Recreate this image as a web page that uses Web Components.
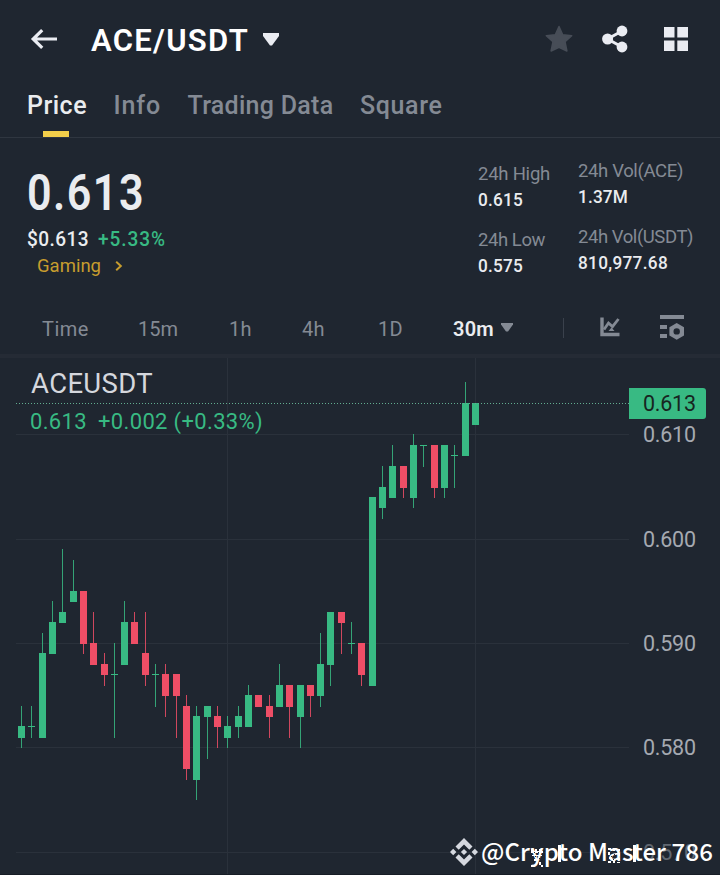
<!DOCTYPE html>
<html lang="en">
<head>
<meta charset="utf-8">
<title>ACE/USDT</title>
<style>
  :root {
    --bg: #1f2630;
    --line: #2f3640;
    --text: #eaecef;
    --muted: #848a94;
    --up: #38ba83;
    --down: #ee4e66;
    --gold: #f3cf4a;
  }
  * { box-sizing: border-box; }
  body {
    margin: 0;
    background: var(--bg);
    color: var(--text);
    font-family: Roboto, "Liberation Sans", sans-serif;
  }
</style>
</head>
<body>
<trade-app></trade-app>

<script>
  const define = (name, cls) => customElements.get(name) || customElements.define(name, cls);

  /**
   * <fit-text width="58"> — one line of text, spaced out (or squeezed) to a
   * known ink width. squeeze=".9" narrows the glyphs before spacing them.
   */
  class FitText extends HTMLElement {
    connectedCallback() {
      const root = this.attachShadow({ mode: 'open' });
      root.innerHTML = `
        <style>
          :host { display:block; flex:none; white-space:nowrap; }
          span { display:block; width:max-content; transform-origin:0 50%; }
        </style>
        <span><slot></slot></span>`;
      const span = root.querySelector('span');
      const target = parseFloat(this.getAttribute('width'));
      const squeeze = parseFloat(this.getAttribute('squeeze') || '1');
      const count = this.textContent.length;
      const natural = span.getBoundingClientRect().width;
      span.style.letterSpacing = ((target / squeeze - natural) / count).toFixed(3) + 'px';
      if (squeeze !== 1) span.style.transform = `scaleX(${squeeze})`;
      this.style.width = target + 'px';
    }
  }

  const ICONS = {
    back: [28, 20, `<path d="M27 10H3M12.2 1.2 3.2 10l9 8.8" fill="none" stroke="#eaecf2" stroke-width="3.2"/>`],
    caret: [16, 13, `<path d="M0 0h16v3L9 12.6H7L0 3z" fill="#eaecf2"/>`],
    star: [28, 28, `<path d="M14 1.500l3.700 8.200 9 1-6.700 6 1.900 9.300L14 22.200 6.100 26l1.900-9.300-6.700-6 9-1z" fill="#474d57" stroke="#474d57" stroke-width="1.500" stroke-linejoin="round"/>`],
    share: [26, 28, `<g fill="#eaecf2"><circle cx="5.600" cy="14" r="5.500"/><circle cx="20" cy="6" r="5.400"/><circle cx="20" cy="22" r="5.400"/></g><path d="M20 6 5.600 14 20 22" fill="none" stroke="#eaecf2" stroke-width="3"/>`],
    grid: [24, 24, `<path d="M0 0h10.500v10.500H0zM13.300 0H24v10.500H13.300zM0 13.500h10.500V24H0zM13.300 13.500H24V24H13.300z" fill="#eaecf2"/>`],
    chevron: [8, 10, `<path d="M1.200 .8 5.800 5l-4.600 4.200" fill="none" stroke="#c79d2e" stroke-width="2"/>`],
    down: [12, 9, `<path d="M0 0h12v1.500L7 8.500H5L0 1.500z" fill="#848a94"/>`],
    chart: [20, 20, `<path d="M2 .5V17.500H19.500" fill="none" stroke="#848a94" stroke-width="3.400"/><path d="M4 12.500 8.500 6l4 3.600L18.500 2" fill="none" stroke="#848a94" stroke-width="2.800"/><path d="M11.500 10.500l3 3.500h-6z" fill="#848a94"/>`],
    settings: [24, 26, `<path d="M0 0h24v4H0zM0 10h7v4H0zM0 19h7v4H0z" fill="#848a94"/><path fill-rule="evenodd" d="M16.700 8l7.300 4.200v8.400l-7.300 4.200-7.300-4.200v-8.400zM16.700 13.200a3.200 3.200 0 1 0 0 6.400 3.200 3.200 0 0 0 0-6.400z" fill="#848a94"/>`],
    // diamond logo: two chevrons, a centre and two side diamonds
    logo: [28, 28, `<g fill="#d5d8df"><path d="M14 0l8.500 8.500-3.200 3.200L14 6.400l-5.300 5.300-3.200-3.200zM14 28l8.500-8.500-3.200-3.200L14 21.600l-5.300-5.300-3.200 3.200z"/><path d="M14 10.900l3.100 3.100-3.100 3.100-3.100-3.100zM3.200 10.800 6.400 14l-3.200 3.200L0 14zM24.800 10.800 28 14l-3.200 3.200-3.200-3.200z"/></g>`]
  };

  class UiIcon extends HTMLElement {
    connectedCallback() {
      const [w, h, body] = ICONS[this.getAttribute('name')];
      this.attachShadow({ mode: 'open' }).innerHTML = `
        <style>:host { display:block; flex:none; line-height:0; } svg { display:block; }</style>
        <svg width="${w}" height="${h}" viewBox="0 0 ${w} ${h}" aria-hidden="true">${body}</svg>`;
    }
  }

  class PairHeader extends HTMLElement {
    connectedCallback() {
      this.attachShadow({ mode: 'open' }).innerHTML = `
        <style>
          :host { display:flex; align-items:center; height:80px; padding:0 32px 0 30px; box-sizing:border-box; }
          .title { margin-left:33px; padding-top:2px; font-size:31px; font-weight:600; line-height:40px; color:#fff; }
          .caret { margin-left:14px; padding-bottom:2px; }
          .tools { display:flex; align-items:center; margin-left:auto; padding-bottom:3px; }
          .share { margin-left:29px; }
          .grid { margin-left:36px; }
          .back { padding-bottom:3px; }
        </style>
        <ui-icon class="back" name="back"></ui-icon>
        <fit-text class="title" width="158">ACE/USDT</fit-text>
        <ui-icon class="caret" name="caret"></ui-icon>
        <div class="tools">
          <ui-icon name="star"></ui-icon>
          <ui-icon class="share" name="share"></ui-icon>
          <ui-icon class="grid" name="grid"></ui-icon>
        </div>`;
    }
  }

  class PageTabs extends HTMLElement {
    connectedCallback() {
      this.attachShadow({ mode: 'open' }).innerHTML = `
        <style>
          :host { display:flex; gap:26.5px; height:58px; padding:8px 27px 0; border-bottom:1px solid var(--line);
                  box-sizing:border-box; font-size:25px; font-weight:500; line-height:36px; color:var(--muted); }
          .tab { display:flex; flex-direction:column; align-items:center; }
          .on { color:var(--text); }
          .on::after { content:""; width:26px; height:6px; margin:7px 2px 0 0; background:var(--gold); }
        </style>
        <div class="tab on"><fit-text width="60">Price</fit-text></div>
        <div class="tab"><fit-text width="47.5">Info</fit-text></div>
        <div class="tab"><fit-text width="146">Trading Data</fit-text></div>
        <div class="tab"><fit-text width="82.500">Square</fit-text></div>`;
    }
  }

  class StatItem extends HTMLElement {
    connectedCallback() {
      this.attachShadow({ mode: 'open' }).innerHTML = `
        <style>
          :host { display:flex; flex-direction:column; gap:2px; height:66px; box-sizing:border-box;
                  font-size:18.5px; line-height:24px; }
          .label { color:var(--muted); }
          .value { color:var(--text); font-weight:500; }
        </style>
        <div class="label"><slot name="label"></slot></div>
        <div class="value"><slot></slot></div>`;
    }
  }

  class PriceSummary extends HTMLElement {
    connectedCallback() {
      this.attachShadow({ mode: 'open' }).innerHTML = `
        <style>
          :host { display:flex; height:164px; padding-left:27px; box-sizing:border-box; }
          .left { width:451px; padding-top:25px; }
          .price { font-size:49.5px; font-weight:600; line-height:60px; }
          .row { display:flex; align-items:center; gap:9px; margin-top:3px; font-size:20.5px; font-weight:500; line-height:26px; }
          .up { color:var(--up); }
          .tag { display:flex; align-items:center; gap:14px; padding-left:10px; font-size:18.5px; line-height:28px; color:#c79d2e; }
          .col { padding-top:24px; width:100px; }
          .col.two { padding-top:21px; }
        </style>
        <div class="left">
          <fit-text class="price" width="118" squeeze=".87">0.613</fit-text>
          <div class="row">
            <fit-text width="62" squeeze=".93">$0.613</fit-text>
            <fit-text class="up" width="68" squeeze=".93">+5.33%</fit-text>
          </div>
          <div class="tag"><fit-text width="64">Gaming</fit-text><ui-icon name="chevron"></ui-icon></div>
        </div>
        <div class="col">
          <stat-item><fit-text slot="label" width="72">24h High</fit-text><fit-text width="45" squeeze=".93">0.615</fit-text></stat-item>
          <stat-item><fit-text slot="label" width="67">24h Low</fit-text><fit-text width="45" squeeze=".93">0.575</fit-text></stat-item>
        </div>
        <div class="col two">
          <stat-item><fit-text slot="label" width="105">24h Vol(ACE)</fit-text><fit-text width="50" squeeze=".93">1.37M</fit-text></stat-item>
          <stat-item><fit-text slot="label" width="115">24h Vol(USDT)</fit-text><fit-text width="90" squeeze=".93">810,977.68</fit-text></stat-item>
        </div>`;
    }
  }

  class IntervalBar extends HTMLElement {
    connectedCallback() {
      this.attachShadow({ mode: 'open' }).innerHTML = `
        <style>
          :host { display:flex; align-items:center; height:56px; padding:0 36px 0 42px; box-sizing:border-box;
                  border-bottom:4px solid #252b35; font-size:20px; line-height:26px; color:var(--muted); }
          fit-text { padding-top:2px; }
          .on { color:var(--text); font-weight:600; }
          .rule { width:1px; height:20px; background:#3a414c; }
        </style>
        <fit-text width="47">Time</fit-text>
        <fit-text width="40" style="margin-left:49px">15m</fit-text>
        <fit-text width="23" style="margin-left:51px">1h</fit-text>
        <fit-text width="23" style="margin-left:50px">4h</fit-text>
        <fit-text width="25" style="margin-left:53px">1D</fit-text>
        <fit-text class="on" width="41" style="margin-left:50px">30m</fit-text>
        <ui-icon name="down" style="margin-left:7px; padding-bottom:2px"></ui-icon>
        <span class="rule" style="margin-left:50px"></span>
        <ui-icon name="chart" style="margin-left:36px; padding-bottom:2px"></ui-icon>
        <ui-icon name="settings" style="margin-left:auto"></ui-icon>`;
    }
  }

  // [open, close, high, low] in thousandths of a USDT
  const CANDLES = [
    [581, 582, 584, 580], [582, 582, 584, 581], [581, 589, 591, 581], [589, 592, 594, 589],
    [592, 593, 599, 592], [594, 595, 598, 594], [595, 590, 595, 589], [590, 588, 593, 588],
    [588, 587, 589, 586], [587, 587, 590, 581], [588, 592, 594, 588], [592, 590, 593, 590],
    [589, 587, 593, 586], [587, 587, 588, 584], [587, 585, 588, 583], [587, 585, 587, 581],
    [584, 578, 585, 577], [577, 583, 584, 575], [583, 584, 584, 579], [583, 582, 584, 580],
    [581, 582, 583, 580], [582, 583, 584, 581], [582, 585, 586, 582], [585, 584, 585, 584],
    [584, 583, 585, 581], [584, 586, 588, 584], [586, 584, 586, 581], [583, 586, 586, 580],
    [586, 585, 586, 583], [585, 588, 591, 584], [588, 593, 593, 586], [593, 592, 593, 589],
    [590, 590, 592, 589], [590, 587, 590, 586], [586, 604, 604, 586], [603, 605, 607, 602],
    [604, 607, 609, 604], [607, 605, 607, 604], [604, 609, 610, 603], [609, 609, 609, 607],
    [609, 605, 609, 604], [605, 609, 609, 604], [608, 608, 609, 605], [608, 613, 615, 608],
    [611, 613, 613, 611]
  ];

  class CandleChart extends HTMLElement {
    connectedCallback() {
      const top = 358;
      const y = p => Math.floor(434.9 + (610 - p) * 10.43) - top;
      const candles = CANDLES.map(([o, c, h, l], i) => {
        const x = Math.floor(21.5 + i * 10.315);
        const body = o === c ? 1 : y(Math.min(o, c)) - y(Math.max(o, c)) + 1;
        return `<g fill="var(${c < o ? '--down' : '--up'})">
          <rect x="${x}" y="${y(h)}" width="1" height="${y(l) - y(h) + 1}" opacity=".85"/>
          <rect x="${x - 3}" y="${y(Math.max(o, c))}" width="7" height="${body}"/></g>`;
      }).join('');
      const levels = [610, 600, 590, 580, 570];
      const grid = levels.map(p => `<rect x="16" y="${y(p)}" width="613" height="1"/>`).join('');
      const labels = levels.map(p =>
        `<text x="643" y="${y(p) + 8}" textLength="53"${p === 570 ? ' opacity=".5"' : ''}>0.${p}</text>`).join('');

      this.attachShadow({ mode: 'open' }).innerHTML = `
        <style>
          :host { display:block; position:relative; height:517px; overflow:hidden; }
          svg { display:block; }
          text { font-size:21.500px; fill:#a5a9b1; }
          .legend { position:absolute; left:31px; top:9px; }
          .name { font-size:27.500px; line-height:34px; color:#d5d7dd; }
          .change { display:flex; gap:11px; margin-top:6px; margin-left:-1px; font-size:22px; line-height:30px; color:var(--up); }
        </style>
        <svg width="720" height="517" viewBox="0 0 720 517" shape-rendering="crispEdges">
          <g fill="#2a313b"><rect x="227" width="1" height="517"/><rect x="475" width="1" height="517"/>${grid}</g>
          ${candles}
          <path d="M16 45.500H629" stroke="#62ad90" stroke-width="1" stroke-dasharray="1 2"/>
          ${labels}
          <path d="M629 30h74a3 3 0 0 1 3 3v25a3 3 0 0 1-3 3h-74z" fill="var(--up)" shape-rendering="auto"/>
          <text x="643" y="53" textLength="53" style="fill:#17251f">0.613</text>
          <rect y="516" width="720" height="1" fill="#171d26"/>
        </svg>
        <div class="legend">
          <fit-text class="name" width="122">ACEUSDT</fit-text>
          <div class="change"><fit-text width="57">0.613</fit-text><fit-text width="165">+0.002 (+0.33%)</fit-text></div>
        </div>
        <slot></slot>`;
    }
  }

  class UserMark extends HTMLElement {
    connectedCallback() {
      this.attachShadow({ mode: 'open' }).innerHTML = `
        <style>
          :host { position:absolute; right:7px; bottom:6px; display:flex; align-items:center; gap:3px;
                  font:500 24px/36px "Noto Sans CJK SC", "Noto Sans", sans-serif; color:#fff; }
          fit-text { margin-top:-2px; }
          .noise { position:absolute; left:0; top:0; }
        </style>
        <ui-icon name="logo"></ui-icon>
        <fit-text width="232">@Crypto Master 786</fit-text>
        <svg class="noise" width="263" height="36" viewBox="450 833 263 36" shape-rendering="crispEdges" aria-hidden="true">
          <g fill="#fff">
            <path d="M531 847h2v2h2v-2h2v2h2v-2h2v2h2v2h-12zM532 853h10v1h-10zM534 857h2v2h-2zM531 863h3v2h-3zM539 860h2v3h-2zM541 863h2v2h-2z"/>
            <path d="M608 846h3v2h-3zM613 846h2v3h-2zM617 847h3v2h-3zM608 850h2v3h-2zM618 851h2v3h-2zM609 855h2v2h-2zM617 856h3v2h-3zM608 859h3v2h-3zM613 859h2v2h-2zM617 860h3v1h-3z"/>
            <path d="M558 843h3v17h-3zM633 843h3v17h-3z"/>
          </g>
          <path fill="#1f2630" d="M534 850h1v1h-1zM538 850h1v1h-1zM535 854h1v1h-1zM539 856h1v1h-1zM611 849h1v1h-1zM614 852h1v1h-1zM611 854h1v1h-1zM616 850h1v1h-1zM613 857h1v1h-1zM616 858h1v1h-1zM615 854h1v1h-1z"/>
        </svg>`;
      const label = this.shadowRoot.querySelector('fit-text');
      label.textContent = this.textContent;
    }
  }

  class TradeApp extends HTMLElement {
    connectedCallback() {
      this.attachShadow({ mode: 'open' }).innerHTML = `
        <style>
          :host { display:flex; flex-direction:column; width:720px; height:875px; overflow:hidden; background:var(--bg); }
        </style>
        <pair-header></pair-header>
        <page-tabs></page-tabs>
        <price-summary></price-summary>
        <interval-bar></interval-bar>
        <candle-chart><user-mark>@Crypto Master 786</user-mark></candle-chart>`;
    }
  }

  define('ui-icon', UiIcon);
  define('fit-text', FitText);
  define('stat-item', StatItem);
  define('pair-header', PairHeader);
  define('page-tabs', PageTabs);
  define('price-summary', PriceSummary);
  define('interval-bar', IntervalBar);
  define('user-mark', UserMark);
  define('candle-chart', CandleChart);
  define('trade-app', TradeApp);
</script>
</body>
</html>
